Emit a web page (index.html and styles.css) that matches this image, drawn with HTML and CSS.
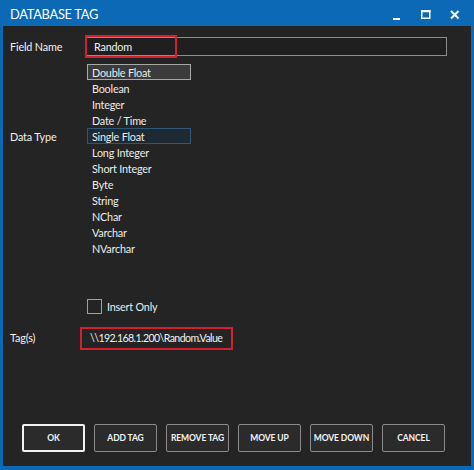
FILE: index.html
```html
<!DOCTYPE html>
<html>
<head>
<meta charset="utf-8">
<link rel="stylesheet" href="styles.css">
</head>
<body>
<div class="window">
  <div class="titlebar">
    <span class="title">DATABASE TAG</span>
    <div class="controls">
      <svg class="ctl" width="12" height="12" viewBox="0 0 12 12"><rect x="2" y="9" width="7" height="2" fill="#fff"/></svg>
      <svg class="ctl" width="12" height="12" viewBox="0 0 12 12"><rect x="1.75" y="1.75" width="8" height="7.5" fill="none" stroke="#fff" stroke-width="1.5"/><rect x="1" y="1" width="9.5" height="2.2" fill="#fff"/></svg>
      <svg class="ctl" width="12" height="12" viewBox="0 0 12 12"><path d="M2 2 L9.5 9.5 M9.5 2 L2 9.5" stroke="#fff" stroke-width="2" fill="none"/></svg>
    </div>
  </div>
  <div class="content">
    <div class="form">
      <div class="label row-field">Field Name</div>
      <div class="field-wrap">
        <div class="textbox">Random</div>
        <div class="highlight"></div>
      </div>

      <div class="label row-type">Data Type</div>
      <ul class="list">
        <li class="item selected">Double Float</li>
        <li class="item">Boolean</li>
        <li class="item">Integer</li>
        <li class="item">Date / Time</li>
        <li class="item focused">Single Float</li>
        <li class="item">Long Integer</li>
        <li class="item">Short Integer</li>
        <li class="item">Byte</li>
        <li class="item">String</li>
        <li class="item">NChar</li>
        <li class="item">Varchar</li>
        <li class="item">NVarchar</li>
      </ul>

      <div class="label"></div>
      <label class="check-row"><span class="checkbox"></span><span>Insert Only</span></label>

      <div class="label row-tags">Tag(s)</div>
      <div class="tags"><span class="tag">\\192.168.1.200\Random.Value</span></div>
    </div>

    <div class="buttons">
      <button class="btn primary">OK</button>
      <button class="btn">ADD TAG</button>
      <button class="btn">REMOVE TAG</button>
      <button class="btn">MOVE UP</button>
      <button class="btn">MOVE DOWN</button>
      <button class="btn">CANCEL</button>
    </div>
  </div>
</div>
</body>
</html>
```

FILE: styles.css
```css
* { box-sizing: border-box; }
html, body { margin: 0; padding: 0; }
body {
  width: 474px;
  height: 470px;
  overflow: hidden;
  font-family: "Lato", "Noto Sans", sans-serif;
  background: #0c69b6;
}
.window {
  width: 474px;
  height: 470px;
  background: #0c69b6;
  padding: 0 3px 4px 3px;
  display: flex;
  flex-direction: column;
}
.titlebar {
  height: 26px;
  display: flex;
  align-items: center;
  justify-content: space-between;
  color: #fff;
  flex: none;
}
.title {
  font-size: 12.8px;
  padding-left: 7px;
  padding-top: 2px;
  letter-spacing: -0.25px;
}
.controls {
  display: flex;
  align-items: center;
  gap: 17px;
  padding-right: 10px;
  padding-top: 3px;
}
.ctl { display: block; }
.content {
  flex: 1;
  background: #242424;
  color: #ececec;
  display: flex;
  flex-direction: column;
  padding: 11px 0 0 7px;
}
.form {
  display: grid;
  grid-template-columns: 76px 1fr;
  align-items: center;
}
.label {
  font-size: 10.8px;
  letter-spacing: -0.15px;
  color: #f0f0f0;
}
.row-field { align-self: center; }
.row-type { align-self: start; padding-top: 74px; }
.row-tags { margin-top: 10px; }
.field-wrap {
  position: relative;
  width: 361px;
}
.textbox {
  height: 19px;
  border: 1px solid #8d8d8d;
  background: #1f1f1f;
  font-size: 10.8px;
  letter-spacing: -0.2px;
  line-height: 17px;
  padding-left: 7px;
  color: #f2f2f2;
}
.highlight {
  position: absolute;
  left: -1px;
  top: -2px;
  width: 92px;
  height: 23px;
  border: 2px solid #d3202c;
}
.list {
  list-style: none;
  margin: 8px 0 0 1px;
  padding: 0;
  width: 104px;
}
.item {
  height: 16px;
  font-size: 10.8px;
  letter-spacing: -0.2px;
  line-height: 15px;
  padding-left: 4px;
  border: 1px solid transparent;
  color: #ececec;
}
.item.selected {
  background: #3b3b3b;
  border-color: #a8a8a8;
}
.item.focused {
  background: #1e2a33;
  border-color: #2f5675;
}
.check-row {
  margin-top: 43px;
  margin-left: 1px;
  display: flex;
  align-items: center;
  gap: 5px;
  font-size: 10.8px;
  letter-spacing: -0.2px;
  height: 15px;
}
.checkbox {
  width: 15px;
  height: 15px;
  border: 1px solid #a0a0a0;
  background: #242424;
}
.tags {
  margin-top: 12px;
  margin-left: -6px;
}
.tag {
  display: inline-block;
  border: 2px solid #d3202c;
  height: 23px;
  line-height: 19px;
  padding: 0 9px 0 8px;
  font-size: 10.6px;
  letter-spacing: -0.6px;
  color: #f2f2f2;
}
.buttons {
  margin-top: 74px;
  padding-left: 12px;
  display: flex;
  gap: 9px;
}
.btn {
  width: 63px;
  height: 28px;
  background: #2b2b2b;
  border: 1px solid #8a8a8a;
  border-radius: 2px;
  color: #f4f4f4;
  font-family: "Lato", "Noto Sans", sans-serif;
  font-weight: 700;
  font-size: 8.5px;
  padding: 0;
  letter-spacing: -0.1px;
}
.btn.primary {
  border: 2px solid #f2f2f2;
}
```
